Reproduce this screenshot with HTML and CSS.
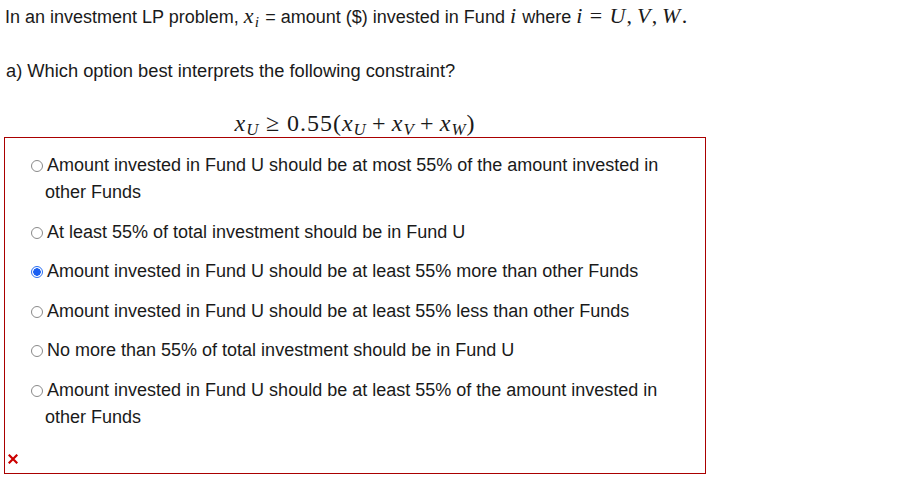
FILE: index.html
```html
<!DOCTYPE html>
<html>
<head>
<meta charset="utf-8">
<link rel="stylesheet" href="styles.css">
</head>
<body>
<div class="page">
  <p class="intro">In an investment LP problem, <span class="m"><i>x</i><sub><i>i</i></sub></span> = amount ($) invested in Fund <span class="m"><i>i</i></span> where <span class="m"><i>i</i><span class="rel">=</span><i>U</i>,<span class="sp"></span><i>V</i>,<span class="sp"></span><i>W</i>.</span></p>
  <p class="question">a) Which option best interprets the following constraint?</p>
  <div class="math"><i>x</i><sub><i>U</i></sub><span class="rel">≥</span>0.55(<i>x</i><sub><i>U</i></sub><span class="bin">+</span><i>x</i><sub><i>V</i></sub><span class="bin">+</span><i>x</i><sub><i>W</i></sub>)</div>
  <div class="box">
    <label class="opt"><span class="radio"></span>Amount invested in Fund U should be at most 55% of the amount invested in other Funds</label>
    <label class="opt"><span class="radio"></span>At least 55% of total investment should be in Fund U</label>
    <label class="opt"><span class="radio checked"></span>Amount invested in Fund U should be at least 55% more than other Funds</label>
    <label class="opt"><span class="radio"></span>Amount invested in Fund U should be at least 55% less than other Funds</label>
    <label class="opt"><span class="radio"></span>No more than 55% of total investment should be in Fund U</label>
    <label class="opt"><span class="radio"></span>Amount invested in Fund U should be at least 55% of the amount invested in other Funds</label>
    <div class="mark"><svg width="10" height="10" viewBox="0 0 10 10"><path d="M1.5 1.5 L8.5 8.5 M8.5 1.5 L1.5 8.5" stroke="#c00" stroke-width="2.2" stroke-linecap="square"/></svg></div>
  </div>
</div>
</body>
</html>
```
FILE: styles.css
```css
html, body {
  margin: 0;
  padding: 0;
  background: #fff;
}
.page {
  padding: 0 0 0 4px;
  font-family: "Liberation Sans", Arial, sans-serif;
  color: #1a1a1a;
}
.intro {
  margin: 0;
  padding: 4px 0 0 1px;
  font-size: 18px;
  line-height: 24px;
  white-space: nowrap;
}
.m {
  font-family: "Liberation Serif", "DejaVu Serif", serif;
  font-size: 22px;
  letter-spacing: 1.2px;
}
.m sub, .math sub {
  font-size: 70%;
  line-height: 0;
  vertical-align: -0.25em;
}
.rel {
  margin: 0 0.28em;
  font-style: normal;
}
.bin {
  margin: 0 0.22em;
}
.sp {
  display: inline-block;
  width: 0.17em;
}
.question {
  margin: 30px 0 0 0;
  padding: 0 0 0 2px;
  font-size: 18.3px;
  line-height: 24px;
}
.math {
  margin-top: 26px;
  text-align: center;
  width: 702px;
  font-family: "Liberation Serif", "DejaVu Serif", serif;
  font-size: 24px;
  letter-spacing: 1px;
  line-height: 28px;
  height: 28px;
}
.box {
  box-sizing: border-box;
  width: 702px;
  height: 337px;
  border: 1px solid #a00;
  padding: 14px 0 0 0;
  display: flex;
  flex-direction: column;
  gap: 12.5px;
}
.opt {
  display: block;
  padding: 0 20px 0 40px;
  font-size: 18px;
  line-height: 27px;
}
.radio {
  display: inline-block;
  width: 12px;
  height: 12px;
  margin-left: -14px;
  margin-right: 4px;
  box-sizing: border-box;
  border: 1px solid #8a8a8a;
  border-radius: 50%;
  vertical-align: -1px;
  background: #fff;
}
.radio.checked {
  border: 1px solid #2a6ef0;
  background: radial-gradient(circle, #1a5ff2 0 3.5px, #fff 4px);
}
.mark {
  margin-top: 11px;
  padding: 0 0 0 3px;
  line-height: 10px;
}
.mark svg {
  display: block;
}
```
